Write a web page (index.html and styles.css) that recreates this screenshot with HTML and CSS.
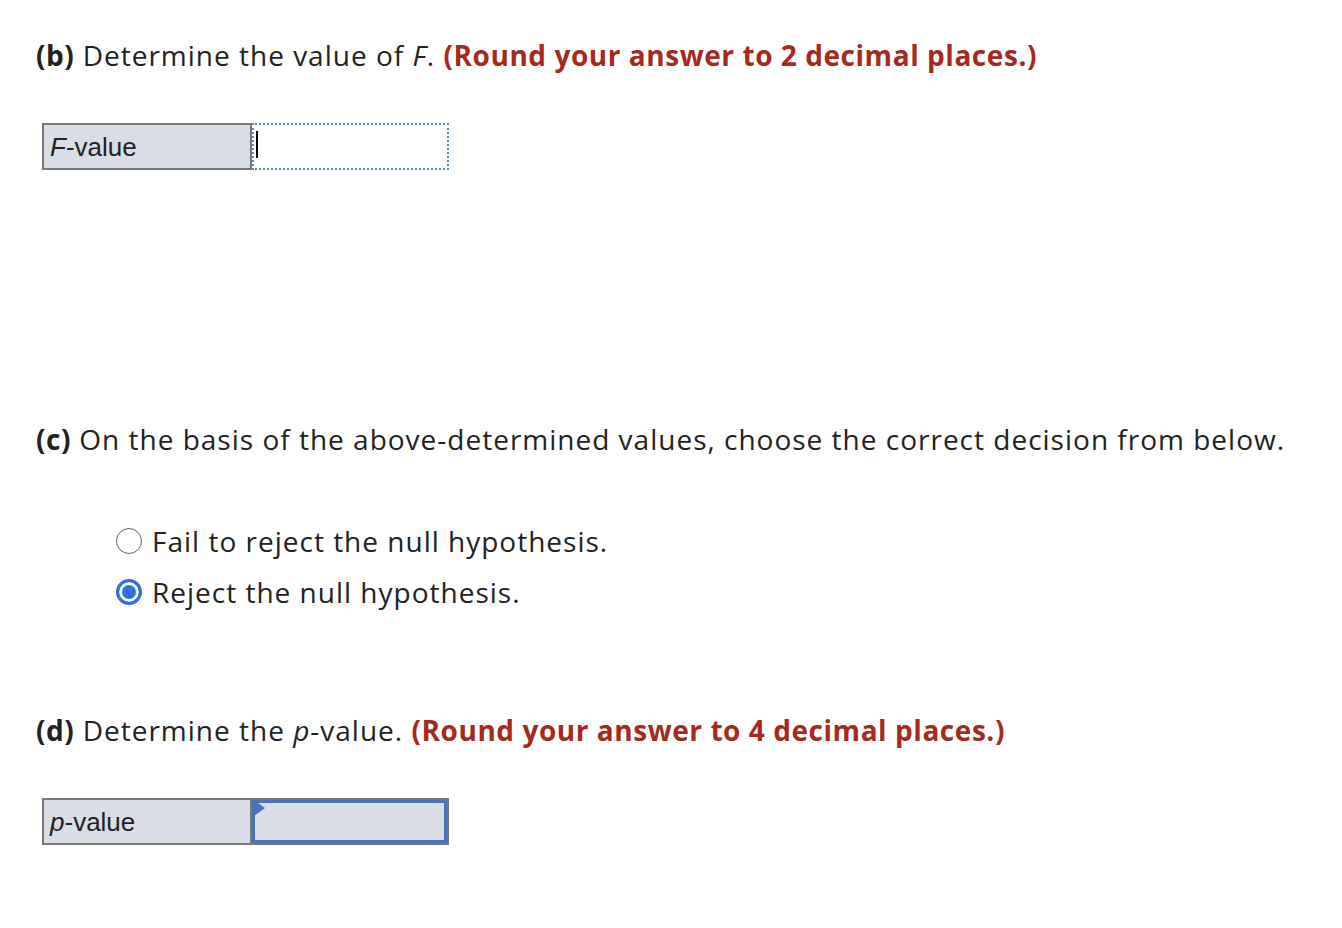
FILE: index.html
```html
<!DOCTYPE html>
<html>
<head>
<meta charset="utf-8">
<link rel="stylesheet" href="styles.css">
</head>
<body>
<div class="page">
  <p class="q q-b"><b>(b)</b> Determine the value of <i>F</i>. <b class="red">(Round your answer to 2 decimal places.)</b></p>
  <div class="ans ans-b">
    <div class="lbl"><i>F</i>-value</div>
    <div class="inp focus"><span class="caret"></span></div>
  </div>

  <p class="q q-c"><b>(c)</b> On the basis of the above-determined values, choose the correct decision from below.</p>
  <div class="opts">
    <div class="opt"><span class="radio"></span><span>Fail to reject the null hypothesis.</span></div>
    <div class="opt"><span class="radio on"></span><span>Reject the null hypothesis.</span></div>
  </div>

  <p class="q q-d"><b>(d)</b> Determine the <i>p</i>-value. <b class="red">(Round your answer to 4 decimal places.)</b></p>
  <div class="ans ans-d">
    <div class="lbl"><i>p</i>-value</div>
    <div class="inp filled"><span class="tri"></span></div>
  </div>
</div>
</body>
</html>
```

FILE: styles.css
```css
html, body {
  margin: 0;
  padding: 0;
  background: #fff;
}
body {
  font-family: "Open Sans", Lato, sans-serif;
  color: #222;
}
.page {
  padding: 36px 0 0 36px;
}
.q {
  margin: 0;
  font-size: 28px;
  line-height: 38px;
  letter-spacing: 1px;
}
.q b { font-weight: 700; letter-spacing: 0.55px; }
.red { color: #a52a1d; }
.ans {
  display: flex;
  margin-left: 6px;
  width: 407px;
  height: 47px;
}
.ans-b { margin-top: 49px; }
.lbl {
  box-sizing: border-box;
  width: 210px;
  height: 47px;
  border: 2px solid #777;
  background: #d9dde5;
  font-family: "Liberation Sans", Arial, sans-serif;
  font-size: 26px;
  padding-left: 6px;
  line-height: 44px;
}
.inp {
  box-sizing: border-box;
  position: relative;
  flex: 1;
  height: 47px;
}
.inp.focus {
  background: #fff;
  border: 2px dotted #5a86cc;
}
.caret {
  position: absolute;
  left: 2px;
  top: 6px;
  width: 2px;
  height: 27px;
  background: #000;
}
.inp.filled {
  background: #d9dde5;
  border-top: 2px solid #777;
  border-right: 2px solid #777;
  border-bottom: 2px solid #777;
  box-shadow: inset 0 0 0 3px #4a72b8;
}
.tri {
  position: absolute;
  left: 2px;
  top: 0;
  width: 0;
  height: 0;
  border-top: 8px solid transparent;
  border-bottom: 8px solid transparent;
  border-left: 11px solid #4a72b8;
}
.q-c { margin-top: 250px; }
.opts {
  margin: 64px 0 0 80px;
  display: flex;
  flex-direction: column;
  gap: 13px;
}
.opt {
  display: flex;
  align-items: center;
  gap: 10px;
  font-size: 28px;
  line-height: 38px;
  letter-spacing: 1px;
}
.radio {
  box-sizing: border-box;
  width: 26px;
  height: 26px;
  border-radius: 50%;
  border: 1.5px solid #666;
  background: #fff;
}
.radio.on {
  border: 3px solid #2e6fe8;
  background: #2e6fe8;
  box-shadow: inset 0 0 0 3px #fff;
}
.q-d { margin-top: 100px; }
.ans-d { margin-top: 49px; }
```
